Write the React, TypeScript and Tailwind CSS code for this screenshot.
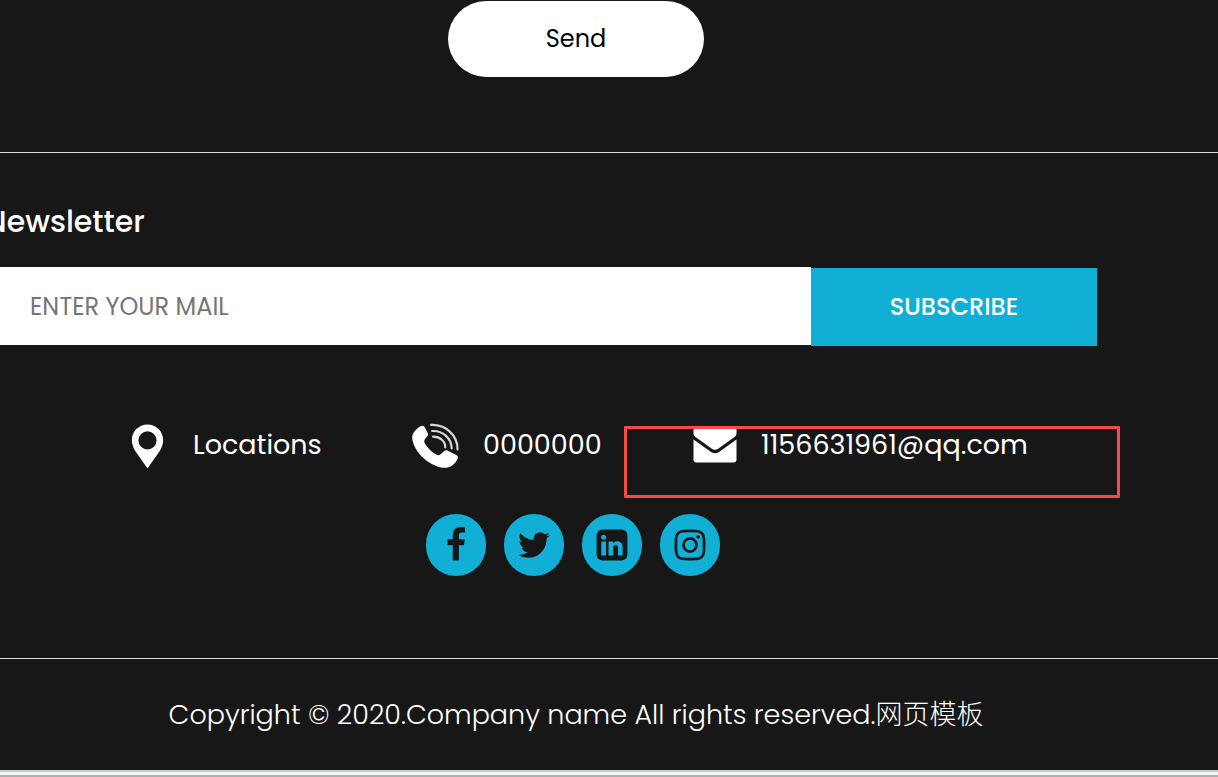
import type { ReactNode } from "react";

type SocialLink = {
  name: string;
  path: string;
};

const socialLinks: SocialLink[] = [
  {
    name: "Facebook",
    path: "M1343 12v264h-157q-86 0-116 36t-30 108v189h293l-39 296h-254v759h-306v-759h-255v-296h255v-218q0-186 104-288.5t277-102.5q147 0 228 12z",
  },
  {
    name: "Twitter",
    path: "M1684 408q-67 98-162 167 1 14 1 42 0 130-38 259.5t-115.5 248.5-184.5 210.5-258 146-323 54.5q-271 0-496-145 35 4 78 4 225 0 401-138-105-2-188-64.5t-114-159.5q33 5 61 5 43 0 85-11-112-23-185.5-111.5t-73.5-205.5v-4q68 38 146 41-66-44-105-115t-39-154q0-88 44-163 121 149 294.5 238.5t371.5 99.5q-8-38-8-74 0-134 94.5-228.5t228.5-94.5q140 0 236 102 109-21 205-78-37 115-142 178 93-10 186-50z",
  },
  {
    name: "LinkedIn",
    path: "M365 1414h231v-694h-231v694zm246-908q-1-52-36-86t-93-34-94.5 34-36.5 86q0 51 35.5 85.5t92.5 34.5h1q59 0 95-34.5t36-85.5zm585 908h231v-398q0-154-73-233t-193-79q-136 0-209 117h2v-101h-231q3 66 0 694h231v-388q0-38 7-56 15-35 45-59.5t74-24.5q116 0 116 157v371zm468-998v960q0 119-84.5 203.5t-203.5 84.5h-960q-119 0-203.5-84.5t-84.5-203.5v-960q0-119 84.5-203.5t203.5-84.5h960q119 0 203.5 84.5t84.5 203.5z",
  },
  {
    name: "Instagram",
    path: "M1152 896q0-106-75-181t-181-75-181 75-75 181 75 181 181 75 181-75 75-181zm138 0q0 164-115 279t-279 115-279-115-115-279 115-279 279-115 279 115 115 279zm108-410q0 38-27 65t-65 27-65-27-27-65 27-65 65-27 65 27 27 65zm-502-220q-7 0-76.5-.5t-105.5 0-96.5 3-103 10-71.5 18.5q-50 20-88 58t-58 88q-11 29-18.5 71.5t-10 103-3 96.5 0 105.5.5 76.5-.5 76.5 0 105.5 3 96.5 10 103 18.5 71.5q20 50 58 88t88 58q29 11 71.5 18.5t103 10 96.5 3 105.5 0 76.5-.5 76.5.5 105.5 0 96.5-3 103-10 71.5-18.5q50-20 88-58t58-88q11-29 18.5-71.5t10-103 3-96.5 0-105.5-.5-76.5.5-76.5 0-105.5-3-96.5-10-103-18.5-71.5q-20-50-58-88t-88-58q-29-11-71.5-18.5t-103-10-96.5-3-105.5 0-76.5.5zm768 630q0 229-5 317-10 208-124 322t-322 124q-88 5-317 5t-317-5q-208-10-322-124t-124-322q-5-88-5-317t5-317q10-208 124-322t322-124q88-5 317-5t317 5q208 10 322 124t124 322q5 88 5 317z",
  },
];

function PinIcon() {
  return (
    <svg viewBox="0 -1 33 47" className="mr-[5px] h-[46px] w-[33px] shrink-0" fill="#fff" aria-hidden="true">
      <path
        fillRule="evenodd"
        d="M16.500 .5C7.500.5.500 7.500.500 16.500c0 4 1.500 7.500 3.500 11L16.500 45.500 29 27.500c2-3.500 3.500-7 3.500-11C32.500 7.500 25.500.5 16.500.5zM16.500 7.500a9.300 9.300 0 1 1 0 18.600 9.300 9.300 0 0 1 0-18.600z"
      />
    </svg>
  );
}

function PhoneIcon() {
  return (
    <svg viewBox="0 0 48 46" className="h-[46px] w-[47px] shrink-0" fill="#fff" aria-hidden="true">
      <path d="M8.500 3.200C9.800 2 11.800 2.200 12.800 3.700L15.800 9.200c.8 1.700.7 3-.5 4.200l-2.200 2.800c-1 1.500-.7 2.800.2 4.600 2.500 4.300 6.700 8.500 11.500 11 1.800.9 3.200.8 4.400-.4l3.700-3.200c1.100-1 2.300-1.200 3.700-.4l8.500 4.500c1.700 1 2.200 2.400 1.300 4.200-2.600 5.200-7.700 9.200-14 8.800-7.400-.6-16.300-5.300-22.700-11.800C3.700 27.300-.3 19 .3 13.200.8 9 4.800 5.300 8.500 3.200z" />
      <g fill="none" stroke="#d8d8d8" strokeWidth="2.200" strokeLinecap="round">
        <path d="M19.500 1.500C34 .8 46.800 12 46.500 26.500" />
        <path d="M20.500 7.700c10.500-.7 20 7.300 20 17.800" />
        <path d="M21.500 13.500c7 0 12.700 4.500 12.500 11" />
      </g>
    </svg>
  );
}

function MailIcon() {
  return (
    <svg viewBox="0 0 44 36" className="mb-0.5 h-9 w-11 shrink-0" fill="#fff" aria-hidden="true">
      <path d="M3 .5h38q2.500 0 2.500 3v3q0 2-2 3.500L25.500 21.500q-3.500 2.500-7 0L2.500 10Q.5 8.500 .5 6.500V3.500q0-3 2.500-3z" />
      <path d="M.5 12.500 18 25q4 2.500 8 0L43.500 12.500V32.500q0 3-3 3h-37q-3 0-3-3z" />
    </svg>
  );
}

function Contact({ icon, children }: { icon: ReactNode; children: ReactNode }) {
  return (
    <a href="#" className="flex h-[46px] items-center gap-6 whitespace-nowrap text-[27px] leading-10">
      {icon}
      <span className="pb-0.5">{children}</span>
    </a>
  );
}

export default function App() {
  return (
    <div className="overflow-hidden bg-[#171717] font-['Poppins','Inter','Noto_Sans_CJK_SC',sans-serif] text-white">
      <section className="flex justify-center border-b border-[#dedede] pt-px pr-[66px] pb-[75px]">
        <button type="submit" className="h-[76px] w-64 rounded-full bg-white text-2xl text-black">
          Send
        </button>
      </section>

      <footer>
        <div className="pt-[49px] pr-[66px]">
          <form onSubmit={(e) => e.preventDefault()}>
            <label htmlFor="mail" className="-ml-[15px] block text-[30px] leading-10 font-medium">
              Newsletter
            </label>
            <div className="mt-[25px] mr-[55px] flex">
              <input
                id="mail"
                type="email"
                placeholder="ENTER YOUR MAIL"
                className="h-[78px] min-w-0 flex-1 bg-white px-[30px] text-2xl text-black outline-none placeholder:text-[#757575]"
              />
              <button
                type="submit"
                className="mt-px h-[78px] w-[286px] bg-[#11afd6] text-2xl font-medium"
              >
                SUBSCRIBE
              </button>
            </div>
          </form>

          <div className="mt-[77px] grid grid-cols-[281px_281px_328px] justify-center">
            <Contact icon={<PinIcon />}>Locations</Contact>
            <Contact icon={<PhoneIcon />}>0000000</Contact>
            <div className="relative">
              <Contact icon={<MailIcon />}>1156631961@qq.com</Contact>
              <span className="pointer-events-none absolute top-[3px] -left-[69px] h-[72px] w-[496px] rounded-[1px] border-3 border-[#f9494b]" />
            </div>
          </div>

          <ul className="mt-[45px] flex justify-center gap-[18px] pr-1.5">
            {socialLinks.map(({ name, path }) => (
              <li key={name}>
                <a
                  href="#"
                  aria-label={name}
                  className="flex h-[62px] w-[60px] items-center justify-center rounded-full bg-[#11afd6]"
                >
                  <svg viewBox="0 0 1792 1792" className="size-9" fill="#171717">
                    <path d={path} />
                  </svg>
                </a>
              </li>
            ))}
          </ul>
        </div>

        <div className="mt-[82px] border-t border-[#dedede] pt-9 pr-[66px] pb-[35px]">
          <p className="text-center text-[27px] leading-10 font-light">
            Copyright © 2020.Company name All rights reserved.<a href="#">网页模板</a>
          </p>
        </div>
      </footer>

      <div className="h-[7px] border-t-2 border-b-2 border-t-[#c8c8c8] border-b-[#aab0b0] bg-[#f4f4f4]" />
    </div>
  );
}
